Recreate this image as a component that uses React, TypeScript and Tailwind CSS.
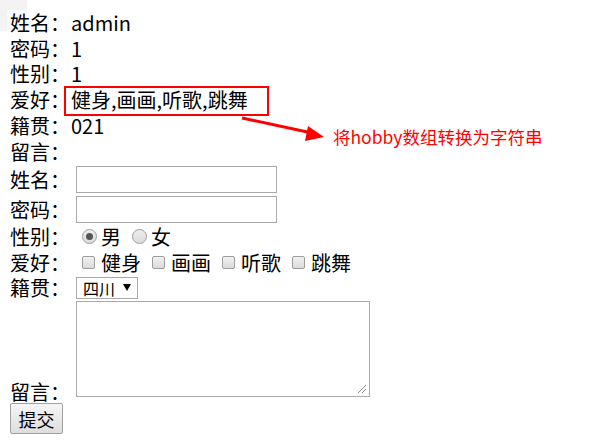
import React from 'react';

const info = [
  { label: '姓名：', value: 'admin' },
  { label: '密码：', value: '1' },
  { label: '性别：', value: '1' },
  { label: '爱好：', value: '健身,画画,听歌,跳舞' },
  { label: '籍贯：', value: '021' },
  { label: '留言：', value: '' },
];

const hobbies = ['健身', '画画', '听歌', '跳舞'];

function Radio({ checked }: { checked?: boolean }) {
  return (
    <span className="w-[15px] h-[15px] rounded-full border border-[#9d9d9d] bg-gradient-to-b from-[#ededed] to-[#dcdcdc] flex items-center justify-center shrink-0">
      {checked && <span className="w-[7px] h-[7px] rounded-full bg-[#555]" />}
    </span>
  );
}

function Checkbox() {
  return (
    <span className="w-[13px] h-[13px] rounded-[2px] border border-[#9d9d9d] bg-gradient-to-b from-[#f1f1f1] to-[#dadada] shrink-0" />
  );
}

export default function App() {
  return (
    <div className="relative w-[606px] h-[446px] bg-white text-black font-['Noto_Sans_CJK_SC','Noto_Sans',sans-serif] text-[20px] overflow-hidden">
      {/* faint grey corner from the capture */}
      <div className="absolute left-0 top-0 w-[27px] h-[31px] bg-[#f3f3f3]">
        <div className="ml-[7px] mt-[10px] w-[20px] h-[21px] bg-[#fafafa]" />
      </div>

      <div className="relative pl-[10px] pt-[10px]">
        {/* submitted values */}
        <div className="leading-[25.7px]">
          {info.map((row) => (
            <div key={row.label} className="flex">
              <span className="w-[61px]">{row.label}</span>
              <span>{row.value}</span>
            </div>
          ))}
        </div>

        {/* form */}
        <div className="leading-[25px]">
          <div className="flex items-center h-[30px]">
            <span className="w-[66px]">姓名：</span>
            <div className="w-[201px] h-[27px] border border-[#a9a9a9]" />
          </div>
          <div className="flex items-center h-[30px]">
            <span className="w-[66px]">密码：</span>
            <div className="w-[201px] h-[27px] border border-[#a9a9a9]" />
          </div>
          <div className="flex items-center h-[25px]">
            <span className="w-[66px]">性别：</span>
            <span className="ml-[6px] mr-[4px]"><Radio checked /></span>
            <span>男</span>
            <span className="ml-[11px] mr-[4px]"><Radio /></span>
            <span>女</span>
          </div>
          <div className="flex items-center h-[26px]">
            <span className="w-[66px]">爱好：</span>
            {hobbies.map((h, i) => (
              <span key={h} className={`flex items-center ${i === 0 ? 'ml-[6px]' : 'ml-[11px]'}`}>
                <Checkbox />
                <span className="ml-[6px]">{h}</span>
              </span>
            ))}
          </div>
          <div className="flex items-center h-[25px]">
            <span className="w-[66px]">籍贯：</span>
            <div className="w-[62px] h-[22px] border border-[#a9a9a9] flex items-center pl-[6px] text-[16px] leading-[20px]">
              <span>四川</span>
              <span className="ml-[8px] w-0 h-0 border-l-[4px] border-r-[4px] border-t-[7px] border-l-transparent border-r-transparent border-t-black" />
            </div>
          </div>
          <div className="flex items-end mt-[1px]">
            <span className="w-[66px] leading-[18px] mb-[-4px]">留言：</span>
            <div className="relative w-[294px] h-[96px] border border-[#a9a9a9]">
              <svg className="absolute right-[2px] bottom-[2px]" width="10" height="10" viewBox="0 0 10 10">
                <line x1="9" y1="1" x2="1" y2="9" stroke="#888" strokeWidth="1" />
                <line x1="9" y1="5" x2="5" y2="9" stroke="#888" strokeWidth="1" />
              </svg>
            </div>
          </div>
          <button className="mt-[6px] w-[53px] h-[31px] border border-[#a0a0a0] rounded-[2px] bg-gradient-to-b from-[#f6f6f6] to-[#dddddd] text-[18px] leading-[20px]">
            提交
          </button>
        </div>
      </div>

      {/* annotation */}
      <div className="absolute left-[64px] top-[86px] w-[205px] h-[30px] border-2 border-[#ff0000]" />
      <svg className="absolute left-[238px] top-[112px]" width="90" height="34" viewBox="0 0 90 34">
        <line x1="4" y1="6" x2="74" y2="21" stroke="#ff0000" strokeWidth="3" />
        <polygon points="86,25 70,14 67,29" fill="#ff0000" />
      </svg>
      <span className="absolute left-[333px] top-[126px] text-[17.5px] leading-[22px] text-[#ff0000]">
        将hobby数组转换为字符串
      </span>
    </div>
  );
}
